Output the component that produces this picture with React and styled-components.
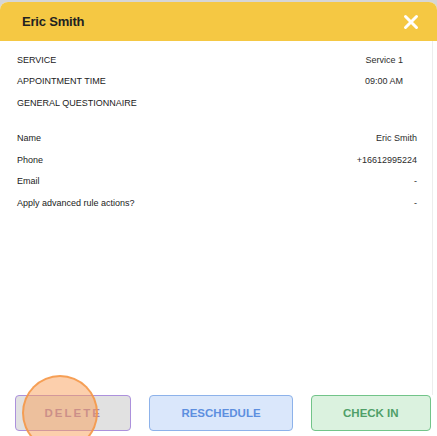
import React from "react";
import styled, { createGlobalStyle } from "styled-components";

const Global = createGlobalStyle`
  html, body {
    margin: 0;
    padding: 0;
    background: #d6d6d6;
    font-family: "Liberation Sans", Arial, sans-serif;
  }
`;

const Card = styled.div`
  width: 437px;
  height: 434px;
  margin-top: 2px;
  background: #ffffff;
  border-radius: 8px 8px 0 0;
  overflow: hidden;
  display: flex;
  flex-direction: column;
  position: relative;
`;

const Header = styled.div`
  height: 39px;
  background: #f5c843;
  display: flex;
  align-items: center;
  justify-content: space-between;
  padding: 0 18px 0 22px;
  flex-shrink: 0;
`;

const Title = styled.div`
  font-size: 13px;
  font-weight: 700;
  color: #222222;
  letter-spacing: -0.2px;
`;

const Close = styled.button`
  border: 0;
  background: none;
  padding: 0;
  width: 16px;
  height: 16px;
  display: flex;
  cursor: pointer;
`;

const Body = styled.div`
  flex: 1;
  display: flex;
  flex-direction: column;
  border-right: 1px solid #ededed;
  margin-right: 4px;
  padding: 8px 0 0 17px;
`;

const Group = styled.div`
  display: flex;
  flex-direction: column;
  padding-right: ${(p) => p.$right}px;
  margin-bottom: ${(p) => p.$gap || 0}px;
`;

const Row = styled.div`
  height: 21.5px;
  display: flex;
  align-items: center;
  justify-content: space-between;
  font-size: 9px;
  color: #222222;
`;

const Value = styled.span`
  color: #2c2c2c;
`;

const Footer = styled.div`
  margin-top: auto;
  display: flex;
  gap: 18px;
  padding: 0 6px 5px 15px;
`;

const palettes = {
  delete: { bg: "#e1e1e1", border: "#ac91dc", color: "#9d7fb8", spacing: "2px" },
  reschedule: { bg: "#dae7fb", border: "#8db2ea", color: "#5d8fdf", spacing: "0" },
  checkin: { bg: "#dbf2df", border: "#72c489", color: "#4f9f68", spacing: "0" },
};

const Button = styled.button`
  height: 36px;
  width: ${(p) => p.$w}px;
  border-radius: 4px;
  border: 1.5px solid ${(p) => palettes[p.$kind].border};
  background: ${(p) => palettes[p.$kind].bg};
  color: ${(p) => palettes[p.$kind].color};
  font-family: "Liberation Sans", Arial, sans-serif;
  font-size: 11.5px;
  font-weight: 700;
  letter-spacing: ${(p) => palettes[p.$kind].spacing};
  cursor: pointer;
  box-sizing: border-box;
`;

const Touch = styled.div`
  position: absolute;
  left: 22px;
  top: 373px;
  width: 76px;
  height: 76px;
  box-sizing: border-box;
  border-radius: 50%;
  background: rgba(250, 160, 90, 0.5);
  border: 2px solid rgba(245, 150, 70, 0.85);
  pointer-events: none;
`;

const top = [
  ["SERVICE", "Service 1"],
  ["APPOINTMENT TIME", "09:00 AM"],
  ["GENERAL QUESTIONNAIRE", ""],
];

const details = [
  ["Name", "Eric Smith"],
  ["Phone", "+16612995224"],
  ["Email", "-"],
  ["Apply advanced rule actions?", "-"],
];

export default function App() {
  return (
    <>
      <Global />
      <Card>
        <Header>
          <Title>Eric Smith</Title>
          <Close aria-label="close">
            <svg width="16" height="16" viewBox="0 0 16 16">
              <path
                d="M2.5 2.5 L13.5 13.5 M13.5 2.5 L2.5 13.5"
                stroke="#ffffff"
                strokeWidth="3"
                strokeLinecap="round"
              />
            </svg>
          </Close>
        </Header>
        <Body>
          <Group $right={29} $gap={14}>
            {top.map(([k, v]) => (
              <Row key={k}>
                <span>{k}</span>
                <Value>{v}</Value>
              </Row>
            ))}
          </Group>
          <Group $right={15}>
            {details.map(([k, v]) => (
              <Row key={k}>
                <span>{k}</span>
                <Value>{v}</Value>
              </Row>
            ))}
          </Group>
        </Body>
        <Footer>
          <Button $kind="delete" $w={117}>DELETE</Button>
          <Button $kind="reschedule" $w={144}>RESCHEDULE</Button>
          <Button $kind="checkin" $w={121}>CHECK IN</Button>
        </Footer>
        <Touch />
      </Card>
    </>
  );
}
